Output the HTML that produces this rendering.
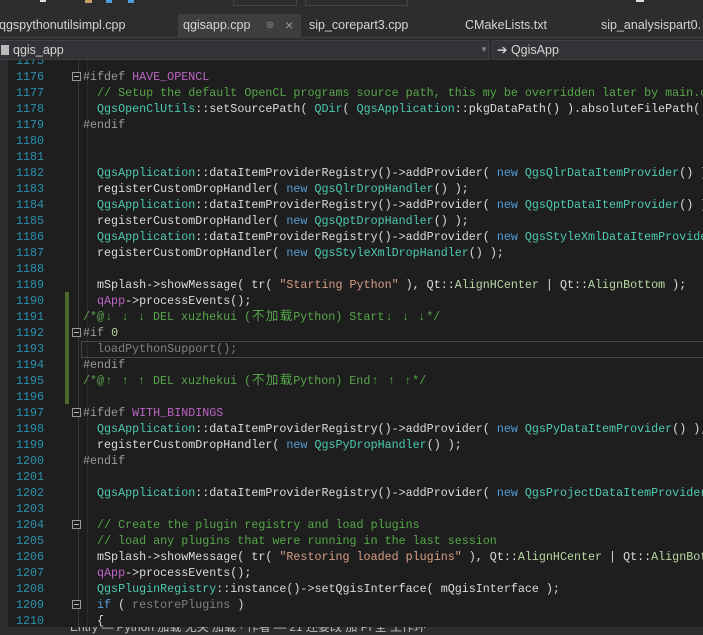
<!DOCTYPE html>
<html><head><meta charset="utf-8"><style>
*{margin:0;padding:0;box-sizing:border-box}
body{width:703px;height:635px;overflow:hidden;background:#1e1e1e;position:relative;font-family:"Liberation Sans","Noto Sans CJK SC",sans-serif}
.tb{position:absolute;left:0;top:0;width:703px;height:14px;background:#2d2d30}
.tabs{position:absolute;left:0;top:14px;width:703px;height:23px;background:#2d2d30}
.tab{position:absolute;top:0;height:23px;line-height:23px;font-size:12.5px;color:#d4d4d4;white-space:nowrap}
.nav{position:absolute;left:0;top:37px;width:703px;height:23px;background:#2d2d30;border-top:1px solid #3f3f46}
.box{position:absolute;top:2px;height:20px;background:#333337;border:1px solid #3f3f46;font-size:12.5px;color:#d4d4d4;line-height:18px;white-space:nowrap}
.ed{position:absolute;left:0;top:60px;width:703px;height:567px;overflow:hidden}
.ln{position:absolute;left:0;width:44px;text-align:right;font-family:"Liberation Mono",monospace;font-size:11.7px;color:#2b91af;line-height:16px;height:16px}
.c{position:absolute;left:83px;font-family:"Liberation Mono","Noto Sans CJK SC",monospace;font-size:11.7px;color:#dcdcdc;line-height:16px;height:16px;white-space:pre}
.k{color:#569cd6}.t{color:#4ec9b0}.cm{color:#57a64a}.p{color:#9b9b9b}.m{color:#bd63c5}.s{color:#d69d85}.e{color:#b8d7a3}.g{color:#808080}
.w{display:inline-block;width:14px;text-align:center;font-size:12.5px}
.a{display:inline-block;width:9.3px;text-align:center}
.fold{position:absolute;left:72px;width:9px;height:9px;border:1px solid #999;background:#1e1e1e}
.fold:after{content:"";position:absolute;left:1px;top:3px;width:5px;height:1px;background:#bbb}
</style></head><body>
<div class="tb">
<div style="position:absolute;left:40px;top:0;width:6px;height:2px;background:#ddd"></div>
<div style="position:absolute;left:85px;top:0;width:7px;height:3px;background:#c8a060"></div>
<div style="position:absolute;left:106px;top:0;width:6px;height:3px;background:#4aa0e0"></div>
<div style="position:absolute;left:128px;top:0;width:6px;height:3px;background:#4aa0e0"></div>
<div style="position:absolute;left:233px;top:0;width:64px;height:6px;border:1px solid #444;border-top:none"></div>
<div style="position:absolute;left:305px;top:0;width:103px;height:6px;border:1px solid #444;border-top:none"></div>
<div style="position:absolute;left:636px;top:0;width:8px;height:2px;background:#ddd"></div>
</div>
<div class="tabs">
<div class="tab" style="left:-1px">qgspythonutilsimpl.cpp</div>
<div style="position:absolute;left:178px;top:0;width:123px;height:23px;background:#3e3e40"></div>
<div class="tab" style="left:183px">qgisapp.cpp</div>
<div class="tab" style="left:266px;color:#888;font-size:10px">&#8859;</div>
<div class="tab" style="left:285px;color:#999;font-size:14px">×</div>
<div class="tab" style="left:309px">sip_corepart3.cpp</div>
<div class="tab" style="left:465px">CMakeLists.txt</div>
<div class="tab" style="left:601px">sip_analysispart0.</div>
</div>
<div class="nav">
<div class="box" style="left:-2px;width:491px"><span style="display:inline-block;width:8px;height:10px;background:#bbb;margin:0 4px 0 2px;vertical-align:-1px"></span>qgis_app<span style="position:absolute;left:481px;top:0;color:#888;font-size:8px">▼</span></div>
<div class="box" style="left:492px;width:215px;padding-left:4px">➔ QgisApp</div>
</div>
<div class="ed">
<div style="position:absolute;left:0;top:0;width:8px;height:567px;background:#2d2d30"></div>
<div style="position:absolute;left:65px;top:232px;width:4px;height:112px;background:#4b6b2b"></div>
<div style="position:absolute;left:81px;top:281px;width:630px;height:17px;border:1px solid #464646"></div>
<div style="position:absolute;left:78px;top:0;width:0;height:567px;border-left:1px dotted #555"></div>
<div style="position:absolute;left:87px;top:0;width:0;height:567px;border-left:1px dotted #3a3a3a"></div>
<div id="L"></div>
</div>
<div style="position:absolute;left:0;top:627px;width:703px;height:8px;background:#2d2d30;overflow:hidden"><div style="position:absolute;left:70px;top:-9px;font-size:12px;color:#bbb;white-space:nowrap">Entry — Python 加载 无关 加载 · 作者 — 21 还要改 加 Pi 全 工作环</div></div>
<script>
var CN='<span class="w">不</span><span class="w">加</span><span class="w">载</span>';
var DN='<span class="a">↓</span> <span class="a">↓</span> <span class="a">↓</span>';
var UP='<span class="a">↑</span> <span class="a">↑</span> <span class="a">↑</span>';
var lines={
1176:'<span class="p">#ifdef</span> <span class="m">HAVE_OPENCL</span>',
1177:'  <span class="cm">// Setup the default OpenCL programs source path, this my be overridden later by main.cpp</span>',
1178:'  <span class="t">QgsOpenClUtils</span>::setSourcePath( <span class="t">QDir</span>( <span class="t">QgsApplication</span>::pkgDataPath() ).absoluteFilePath( ',
1179:'<span class="p">#endif</span>',
1182:'  <span class="t">QgsApplication</span>::dataItemProviderRegistry()->addProvider( <span class="k">new</span> <span class="t">QgsQlrDataItemProvider</span>() );',
1183:'  registerCustomDropHandler( <span class="k">new</span> <span class="t">QgsQlrDropHandler</span>() );',
1184:'  <span class="t">QgsApplication</span>::dataItemProviderRegistry()->addProvider( <span class="k">new</span> <span class="t">QgsQptDataItemProvider</span>() );',
1185:'  registerCustomDropHandler( <span class="k">new</span> <span class="t">QgsQptDropHandler</span>() );',
1186:'  <span class="t">QgsApplication</span>::dataItemProviderRegistry()->addProvider( <span class="k">new</span> <span class="t">QgsStyleXmlDataItemProvider</span>() );',
1187:'  registerCustomDropHandler( <span class="k">new</span> <span class="t">QgsStyleXmlDropHandler</span>() );',
1189:'  mSplash->showMessage( tr( <span class="s">"Starting Python"</span> ), Qt::<span class="e">AlignHCenter</span> | Qt::<span class="e">AlignBottom</span> );',
1190:'  <span class="m">qApp</span>->processEvents();',
1191:'<span class="cm">/*@'+DN+' DEL xuzhekui ('+CN+'Python) Start'+DN+'*/</span>',
1192:'<span class="p">#if</span> <span class="e">0</span>',
1193:'  <span class="g">loadPythonSupport();</span>',
1194:'<span class="p">#endif</span>',
1195:'<span class="cm">/*@'+UP+' DEL xuzhekui ('+CN+'Python) End'+UP+'*/</span>',
1197:'<span class="p">#ifdef</span> <span class="m">WITH_BINDINGS</span>',
1198:'  <span class="t">QgsApplication</span>::dataItemProviderRegistry()->addProvider( <span class="k">new</span> <span class="t">QgsPyDataItemProvider</span>() );',
1199:'  registerCustomDropHandler( <span class="k">new</span> <span class="t">QgsPyDropHandler</span>() );',
1200:'<span class="p">#endif</span>',
1202:'  <span class="t">QgsApplication</span>::dataItemProviderRegistry()->addProvider( <span class="k">new</span> <span class="t">QgsProjectDataItemProvider</span>() );',
1204:'  <span class="cm">// Create the plugin registry and load plugins</span>',
1205:'  <span class="cm">// load any plugins that were running in the last session</span>',
1206:'  mSplash->showMessage( tr( <span class="s">"Restoring loaded plugins"</span> ), Qt::<span class="e">AlignHCenter</span> | Qt::<span class="e">AlignBottom</span> );',
1207:'  <span class="m">qApp</span>->processEvents();',
1208:'  <span class="t">QgsPluginRegistry</span>::instance()->setQgisInterface( mQgisInterface );',
1209:'  <span class="k">if</span> ( <span class="g">restorePlugins</span> )',
1210:'  {'
};
var folds=[1176,1192,1197,1204,1209];
var h='';
for(var n=1175;n<=1211;n++){var yy=(n-1175)*16-7;
h+='<div class="ln" style="top:'+yy+'px">'+n+'</div>';
if(lines[n])h+='<div class="c" style="top:'+yy+'px">'+lines[n]+'</div>';
if(folds.indexOf(n)>=0)h+='<div class="fold" style="top:'+(yy+3)+'px"></div>';}
document.getElementById('L').innerHTML=h;
</script>
</body></html>
